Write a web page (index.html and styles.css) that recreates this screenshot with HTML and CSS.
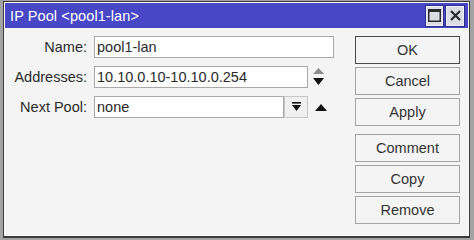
FILE: index.html
```html
<!DOCTYPE html>
<html>
<head>
<meta charset="utf-8">
<link rel="stylesheet" href="styles.css">
</head>
<body>
<div class="window">
  <div class="inner">
    <div class="titlebar">
      <span class="title">IP Pool &lt;pool1-lan&gt;</span>
      <div class="tbtns">
        <div class="tbtn"><svg width="13" height="13" viewBox="0 0 13 13"><rect x="0.75" y="0.75" width="11.5" height="11.5" fill="none" stroke="#2a2a2a" stroke-width="1.5"/><rect x="0" y="0" width="13" height="3" fill="#2a2a2a"/></svg></div>
        <div class="tbtn"><svg width="11" height="11" viewBox="0 0 11 11"><path d="M1 1 L10 10 M10 1 L1 10" stroke="#2a2a2a" stroke-width="2.2"/></svg></div>
      </div>
    </div>
    <div class="content">
      <div class="form">
        <label class="lbl">Name:</label>
        <div class="field"><div class="input w-name">pool1-lan</div></div>
        <label class="lbl">Addresses:</label>
        <div class="field"><div class="input w-addr">10.10.0.10-10.10.0.254</div>
          <svg class="spin" width="11" height="18" viewBox="0 0 11 18"><polygon points="0,6 5.5,0 11,6" fill="#8c8c8c"/><polygon points="0,10 11,10 5.5,17" fill="#111"/></svg>
        </div>
        <label class="lbl">Next Pool:</label>
        <div class="field"><div class="input w-next">none</div>
          <div class="drop"><svg width="9" height="10" viewBox="0 0 9 10"><rect x="0" y="0" width="9" height="1.6" fill="#111"/><polygon points="0,3 9,3 4.5,9" fill="#111"/></svg></div>
          <svg class="up" width="12" height="7" viewBox="0 0 12 7"><polygon points="0,7 6,0 12,7" fill="#111"/></svg>
        </div>
      </div>
      <div class="buttons">
        <div class="btn default">OK</div>
        <div class="btn">Cancel</div>
        <div class="btn">Apply</div>
        <div class="btn sep">Comment</div>
        <div class="btn">Copy</div>
        <div class="btn">Remove</div>
      </div>
    </div>
  </div>
</div>
</body>
</html>
```
FILE: styles.css
```css
html, body {
  margin: 0;
  padding: 0;
  background: #a3a3a3;
  width: 474px;
  height: 239px;
  overflow: hidden;
  font-family: "Liberation Sans", Arial, sans-serif;
  font-size: 14.5px;
}
.window {
  margin: 1px 0 0 3px;
  width: 465px;
  height: 234px;
  border: 1px solid #3a3a3a;
  border-bottom-width: 2px;
}
.inner {
  height: 232px;
  border: 1px solid #fafafa;
  background: #f4f4f4;
  display: flex;
  flex-direction: column;
}
.titlebar {
  height: 25px;
  background: #4848c6;
  display: flex;
  align-items: center;
  justify-content: space-between;
  padding: 0 3px 0 5px;
}
.title {
  color: #ffffff;
  font-size: 14.5px;
  letter-spacing: 0.1px;
}
.tbtns {
  display: flex;
  gap: 1px;
}
.tbtn {
  width: 17px;
  height: 20px;
  border: 1px solid #2e2e8a;
  box-shadow: inset 0 0 0 1px #f0f0f6;
  background: #dcdce6;
  display: flex;
  align-items: center;
  justify-content: center;
}
.tbtn + .tbtn {
  width: 18px;
}
.content {
  flex: 1;
  display: flex;
  justify-content: space-between;
  padding: 8px 8px 0 0;
}
.form {
  display: grid;
  grid-template-columns: 82px 240px;
  grid-auto-rows: 22px;
  column-gap: 7px;
  row-gap: 8px;
  align-content: start;
}
.lbl {
  text-align: right;
  align-self: center;
  color: #2a2a2a;
}
.field {
  display: flex;
  align-items: center;
}
.input {
  box-sizing: border-box;
  height: 22px;
  border: 1px solid #a8a8a8;
  background: #ffffff;
  padding: 0 2px;
  line-height: 20px;
  color: #2a2a2a;
  white-space: nowrap;
  overflow: hidden;
}
.w-name { width: 240px; }
.w-addr { width: 214px; }
.w-next { width: 190px; }
.spin {
  margin-left: 5px;
}
.drop {
  width: 24px;
  height: 22px;
  box-sizing: border-box;
  border: 1px solid #c8c8c8;
  background: #f0f0f0;
  display: flex;
  align-items: center;
  justify-content: center;
}
.up {
  margin-left: 7px;
}
.buttons {
  width: 105px;
  display: flex;
  flex-direction: column;
  gap: 3px;
}
.btn {
  height: 28px;
  box-sizing: border-box;
  border: 1px solid #a4a4a4;
  background: #f4f4f4;
  display: flex;
  align-items: center;
  justify-content: center;
  color: #333333;
}
.btn.default {
  border-color: #4a4a4a;
}
.btn.sep {
  margin-top: 5px;
}
```
